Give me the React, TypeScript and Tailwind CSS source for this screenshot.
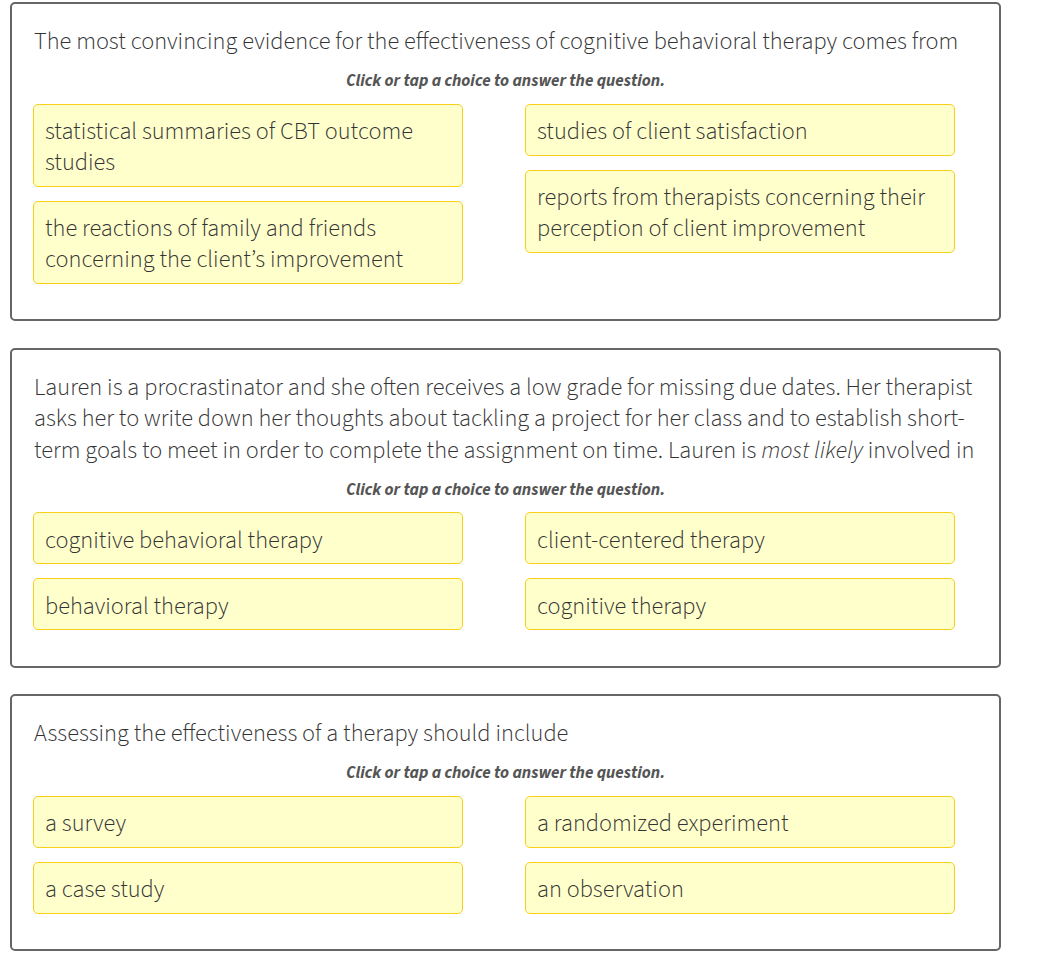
import React from "react";

type Q = {
  lines: React.ReactNode[];
  left: string[][];
  right: string[][];
};

const questions: Q[] = [
  {
    lines: [
      "The most convincing evidence for the effectiveness of cognitive behavioral therapy comes from",
    ],
    left: [
      ["statistical summaries of CBT outcome", "studies"],
      ["the reactions of family and friends", "concerning the client\u2019s improvement"],
    ],
    right: [
      ["studies of client satisfaction"],
      ["reports from therapists concerning their", "perception of client improvement"],
    ],
  },
  {
    lines: [
      "Lauren is a procrastinator and she often receives a low grade for missing due dates. Her therapist",
      "asks her to write down her thoughts about tackling a project for her class and to establish short-",
      <>
        term goals to meet in order to complete the assignment on time. Lauren is <em>most likely</em> involved in
      </>,
    ],
    left: [["cognitive behavioral therapy"], ["behavioral therapy"]],
    right: [["client-centered therapy"], ["cognitive therapy"]],
  },
  {
    lines: ["Assessing the effectiveness of a therapy should include"],
    left: [["a survey"], ["a case study"]],
    right: [["a randomized experiment"], ["an observation"]],
  },
];

function Choice({ lines }: { lines: string[] }) {
  return (
    <div className="rounded-[5px] border border-[#f7cf1b] bg-[#ffffcc] px-[11px] pt-[11.5px] pb-[7.5px] text-[24.3px] leading-[31px] font-light text-[#333333] cursor-pointer whitespace-nowrap">
      {lines.map((l, i) => (
        <React.Fragment key={i}>
          {i > 0 && <br />}
          {l}
        </React.Fragment>
      ))}
    </div>
  );
}

function Card({ q }: { q: Q }) {
  return (
    <div className="rounded-[5px] border-2 border-[#666666] bg-white px-[21px] pt-[22px] pb-[35.5px]">
      <div className="text-[24.3px] leading-[31.5px] font-light text-[#333333] pl-[1px] whitespace-nowrap">
        {q.lines.map((l, i) => (
          <React.Fragment key={i}>
            {i > 0 && <br />}
            {l}
          </React.Fragment>
        ))}
      </div>
      <div className="mt-[13.5px] text-center text-[17px] leading-[20px] font-bold italic text-[#555555]">
        Click or tap a choice to answer the question.
      </div>
      <div className="mt-[12.5px] flex gap-[62px] items-start">
        <div className="flex w-[430px] flex-col gap-[14px]">
          {q.left.map((c, i) => (
            <Choice key={i} lines={c} />
          ))}
        </div>
        <div className="flex w-[430px] flex-col gap-[14px]">
          {q.right.map((c, i) => (
            <Choice key={i} lines={c} />
          ))}
        </div>
      </div>
    </div>
  );
}

export default function App() {
  return (
    <div
      className="min-h-[967px] bg-white pt-[2px] pl-[10px]"
      style={{ fontFamily: '"Source Sans Pro", "Source Sans 3", Lato, "Noto Sans", sans-serif' }}
    >
      <div className="flex w-[991px] flex-col gap-[26.5px]">
        {questions.map((q, i) => (
          <Card key={i} q={q} />
        ))}
      </div>
    </div>
  );
}
